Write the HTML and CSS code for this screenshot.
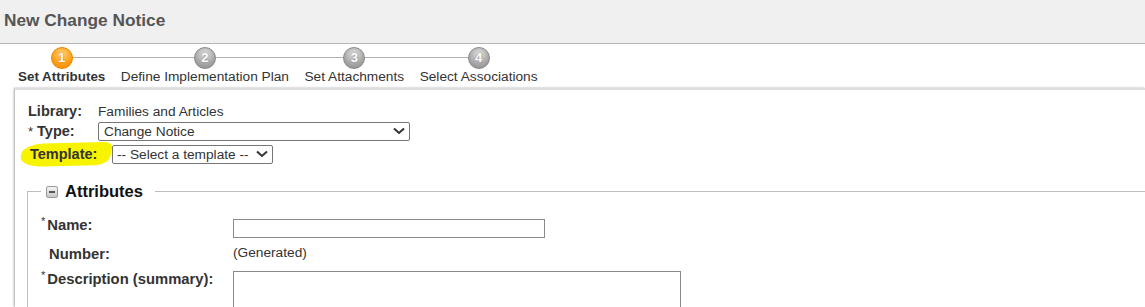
FILE: index.html
```
<!DOCTYPE html>
<html lang="en">
<head>
	<meta charset="UTF-8">
	<title>New Change Notice</title>
	<link rel="stylesheet" href="styles.css">
</head>
<body>

	<!-- Cabeçalho -->
	<div class="cabecalho">New Change Notice</div>

	<!-- Passos do assistente -->
	<div class="passos">
		<div class="linha-passos"></div>
		<div class="passo atual">
			<span class="bola">1</span>
			<span class="rotulo">Set Attributes</span>
		</div>
		<div class="passo">
			<span class="bola">2</span>
			<span class="rotulo">Define Implementation Plan</span>
		</div>
		<div class="passo">
			<span class="bola">3</span>
			<span class="rotulo">Set Attachments</span>
		</div>
		<div class="passo">
			<span class="bola">4</span>
			<span class="rotulo">Select Associations</span>
		</div>
	</div>

	<!-- Painel do formulario -->
	<div class="painel">
		<div class="topo">
			<div class="linha">
				<span class="campo">Library:</span>
				<span class="valor">Families and Articles</span>
			</div>
			<div class="linha">
				<span class="campo"><span class="ast">*</span> Type:</span>
				<div class="caixa caixa-tipo">
					<span>Change Notice</span>
					<svg width="12" height="8" viewBox="0 0 12 8"><path d="M1 1.5 L6 6 L11 1.5" fill="none" stroke="#333" stroke-width="2"/></svg>
				</div>
			</div>
			<div class="linha linha-modelo">
				<span class="campo marcado">Template:</span>
				<div class="caixa caixa-modelo">
					<span>-- Select a template --</span>
					<svg width="12" height="8" viewBox="0 0 12 8"><path d="M1 1.5 L6 6 L11 1.5" fill="none" stroke="#333" stroke-width="2"/></svg>
				</div>
			</div>
		</div>

		<fieldset class="grupo">
			<legend>
				<span class="menos"><span></span></span>
				Attributes
			</legend>
			<div class="item item-nome">
				<span class="rot"><sup>*</sup>Name:</span>
				<div class="entrada"></div>
			</div>
			<div class="item item-numero">
				<span class="rot">Number:</span>
				<span class="gerado">(Generated)</span>
			</div>
			<div class="item item-desc">
				<span class="rot"><sup>*</sup>Description (summary):</span>
				<div class="area"></div>
			</div>
		</fieldset>
	</div>

</body>
</html>
```

FILE: styles.css
```
	* {
		box-sizing: border-box;
	}

	body {
		font-family: "Liberation Sans", Arial, sans-serif;
		margin: 0;
		color: #333;
		background: #ffffff;
		height: 307px;
		overflow: hidden;
	}

	/* cabecalho cinza */
	div.cabecalho {
		height: 44px;
		background-color: #f0f0f0;
		border-bottom: 1px solid #b6b6b6;
		padding: 10px 0 0 4px;
		font-size: 17.3px;
		font-weight: bold;
		color: #555;
	}

	/* passos */
	div.passos {
		position: relative;
		display: flex;
		gap: 15.5px;
		padding: 3px 0 0 18px;
		height: 44px;
	}

	div.linha-passos {
		position: absolute;
		left: 62px;
		width: 418px;
		top: 13px;
		border-top: 1px solid #b0b0b0;
	}

	div.passo {
		position: relative;
		display: flex;
		flex-direction: column;
		align-items: center;
	}

	span.bola {
		display: block;
		width: 22px;
		height: 22px;
		border-radius: 50%;
		border: 1px solid #8a8a8a;
		background: radial-gradient(circle at 50% 30%, #e2e2e2 0%, #aaaaaa 55%, #888888 100%);
		color: #ffffff;
		font-size: 13px;
		font-weight: bold;
		text-align: center;
		line-height: 20px;
		text-shadow: 0 0 2px #777;
	}

	div.atual span.bola {
		border-color: #e98500;
		background: radial-gradient(circle at 50% 30%, #ffd27a 0%, #ffa21a 55%, #f08400 100%);
		text-shadow: 0 0 2px #c86a00;
	}

	span.rotulo {
		font-size: 13.7px;
		line-height: 16px;
		color: #333;
		white-space: nowrap;
	}

	div.atual span.rotulo {
		font-weight: bold;
		font-size: 13.4px;
	}

	/* painel */
	div.painel {
		margin-left: 15px;
		border-top: 2px solid #dedede;
		box-shadow: -1px 0 2px rgba(0,0,0,0.35);
		padding: 11px 0 0 13px;
		height: 219px;
		overflow: hidden;
	}

	div.linha {
		display: flex;
		align-items: center;
		height: 20px;
	}

	div.linha-modelo {
		margin-top: 3px;
		height: 20px;
	}

	span.campo {
		width: 70px;
		font-size: 14.5px;
		font-weight: bold;
		color: #333;
		white-space: nowrap;
	}

	span.ast {
		font-weight: normal;
		font-size: 13px;
	}

	span.valor {
		font-size: 13.7px;
	}

	/* marca amarela em volta do rotulo */
	span.marcado {
		position: relative;
		margin-left: 2px;
		width: 82px;
	}

	span.marcado::before {
		content: "";
		position: absolute;
		left: -9px;
		right: 1px;
		top: -3px;
		bottom: -4px;
		background-color: #f8f300;
		border-radius: 22% 10% 14% 28% / 40% 30% 40% 45%;
		transform: rotate(-1.5deg) skewX(-14deg);
		z-index: -1;
	}

	div.caixa {
		display: flex;
		align-items: center;
		justify-content: space-between;
		height: 19px;
		border: 1px solid #767676;
		border-radius: 2px;
		font-size: 13.7px;
		background: #fff;
		padding: 0 4px 0 5px;
	}

	div.caixa-tipo {
		width: 312px;
	}

	div.caixa-modelo {
		width: 161px;
		padding-left: 4px;
	}

	/* grupo de atributos */
	fieldset.grupo {
		margin: 18px 0 0 -1px;
		border: none;
		border-top: 1px solid #bdbdbd;
		border-left: 1px solid #bdbdbd;
		padding: 17px 0 0 13px;
		height: 140px;
	}

	fieldset.grupo legend {
		margin-left: 0;
		padding: 0 12px 0 5px;
		font-size: 16.5px;
		font-weight: bold;
		color: #111;
		display: flex;
		align-items: center;
		gap: 7px;
	}

	span.menos {
		display: inline-flex;
		align-items: center;
		justify-content: center;
		width: 12px;
		height: 12px;
		border: 1px solid #9a9a9a;
		border-radius: 2px;
		background: linear-gradient(#f4f4f4, #c8c8c8);
	}

	span.menos span {
		display: block;
		width: 6px;
		height: 2px;
		background: #555;
	}

	div.item {
		display: flex;
		align-items: flex-start;
	}

	span.rot {
		width: 192px;
		font-size: 14.8px;
		font-weight: bold;
		line-height: 14px;
		color: #333;
		padding-left: 8px;
		white-space: nowrap;
	}

	span.rot sup {
		font-size: 11px;
		font-weight: normal;
		margin-left: -8px;
		margin-right: 2px;
		vertical-align: 5px;
		line-height: 0;
	}

	div.entrada {
		margin-top: 1px;
		width: 312px;
		height: 19px;
		border: 1px solid #8a8a8a;
	}

	div.item-numero {
		margin-top: 9px;
	}

	span.gerado {
		font-size: 13.7px;
		line-height: 14px;
		margin-top: -1px;
	}

	div.item-desc {
		margin-top: 11px;
	}

	div.area {
		margin-top: -1px;
		width: 448px;
		height: 60px;
		border: 1px solid #8a8a8a;
	}
```
